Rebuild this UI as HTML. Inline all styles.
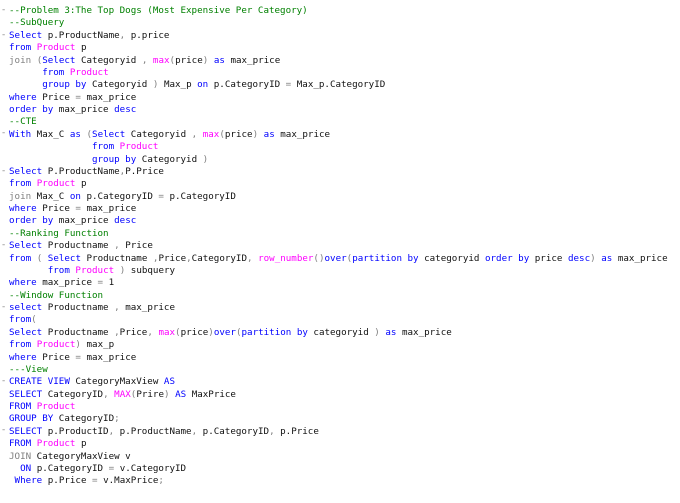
<!DOCTYPE html>
<html><head><meta charset="utf-8"><style>
body{margin:0;background:#fff;width:680px;height:503px;overflow:hidden;position:relative}
pre{margin:0;position:absolute;left:9px;top:5px;font-family:"DejaVu Sans Mono","Liberation Mono",monospace;font-size:9.2px;line-height:12.37px;color:#111}
.k{color:#0000ff}.f{color:#ff00ff}.c{color:#008000}.g{color:#808080}
.m{position:absolute;left:2px;font:9px "DejaVu Sans",sans-serif;color:#888}
</style></head><body>
<div class="m" style="top:5px">-</div>
<div class="m" style="top:30px">-</div>
<div class="m" style="top:128px">-</div>
<div class="m" style="top:166px">-</div>
<div class="m" style="top:240px">-</div>
<div class="m" style="top:302px">-</div>
<div class="m" style="top:376px">-</div>
<div class="m" style="top:425px">-</div>
<pre><span class="c">--Problem 3:The Top Dogs (Most Expensive Per Category)</span>
<span class="c">--SubQuery</span>
<span class="k">Select</span> p.ProductName<span class="g">,</span> p.price
<span class="k">from</span> <span class="f">Product</span> p
<span class="g">join</span> <span class="g">(</span><span class="k">Select</span> Categoryid <span class="g">,</span> <span class="f">max</span><span class="g">(</span>price<span class="g">)</span> <span class="k">as</span> max_price
      <span class="k">from</span> <span class="f">Product</span>
      <span class="k">group by</span> Categoryid <span class="g">)</span> Max_p <span class="k">on</span> p.CategoryID <span class="g">=</span> Max_p.CategoryID
<span class="k">where</span> Price <span class="g">=</span> max_price
<span class="k">order by</span> max_price <span class="k">desc</span>
<span class="c">--CTE</span>
<span class="k">With</span> Max_C <span class="k">as</span> <span class="g">(</span><span class="k">Select</span> Categoryid <span class="g">,</span> <span class="f">max</span><span class="g">(</span>price<span class="g">)</span> <span class="k">as</span> max_price
               <span class="k">from</span> <span class="f">Product</span>
               <span class="k">group by</span> Categoryid <span class="g">)</span>
<span class="k">Select</span> P.ProductName<span class="g">,</span>P.Price
<span class="k">from</span> <span class="f">Product</span> p
<span class="g">join</span> Max_C <span class="k">on</span> p.CategoryID <span class="g">=</span> p.CategoryID
<span class="k">where</span> Price <span class="g">=</span> max_price
<span class="k">order by</span> max_price <span class="k">desc</span>
<span class="c">--Ranking Function</span>
<span class="k">Select</span> Productname <span class="g">,</span> Price
<span class="k">from</span> <span class="g">(</span> <span class="k">Select</span> Productname <span class="g">,</span>Price<span class="g">,</span>CategoryID<span class="g">,</span> <span class="f">row_number</span><span class="g">()</span><span class="k">over</span><span class="g">(</span><span class="k">partition by</span> categoryid <span class="k">order by</span> price <span class="k">desc</span><span class="g">)</span> <span class="k">as</span> max_price
       <span class="k">from</span> <span class="f">Product</span> <span class="g">)</span> subquery
<span class="k">where</span> max_price <span class="g">=</span> 1
<span class="c">--Window Function</span>
<span class="k">select</span> Productname <span class="g">,</span> max_price
<span class="k">from</span><span class="g">(</span>
<span class="k">Select</span> Productname <span class="g">,</span>Price<span class="g">,</span> <span class="f">max</span><span class="g">(</span>price<span class="g">)</span><span class="k">over</span><span class="g">(</span><span class="k">partition by</span> categoryid <span class="g">)</span> <span class="k">as</span> max_price
<span class="k">from</span> <span class="f">Product</span><span class="g">)</span> max_p
<span class="k">where</span> Price <span class="g">=</span> max_price
<span class="c">---View</span>
<span class="k">CREATE VIEW</span> CategoryMaxView <span class="k">AS</span>
<span class="k">SELECT</span> CategoryID<span class="g">,</span> <span class="f">MAX</span><span class="g">(</span>Prire<span class="g">)</span> <span class="k">AS</span> MaxPrice
<span class="k">FROM</span> <span class="f">Product</span>
<span class="k">GROUP BY</span> CategoryID<span class="g">;</span>
<span class="k">SELECT</span> p.ProductID<span class="g">,</span> p.ProductName<span class="g">,</span> p.CategoryID<span class="g">,</span> p.Price
<span class="k">FROM</span> <span class="f">Product</span> p
<span class="g">JOIN</span> CategoryMaxView v
  <span class="k">ON</span> p.CategoryID <span class="g">=</span> v.CategoryID
 <span class="k">Where</span> p.Price <span class="g">=</span> v.MaxPrice<span class="g">;</span></pre>
</body></html>
